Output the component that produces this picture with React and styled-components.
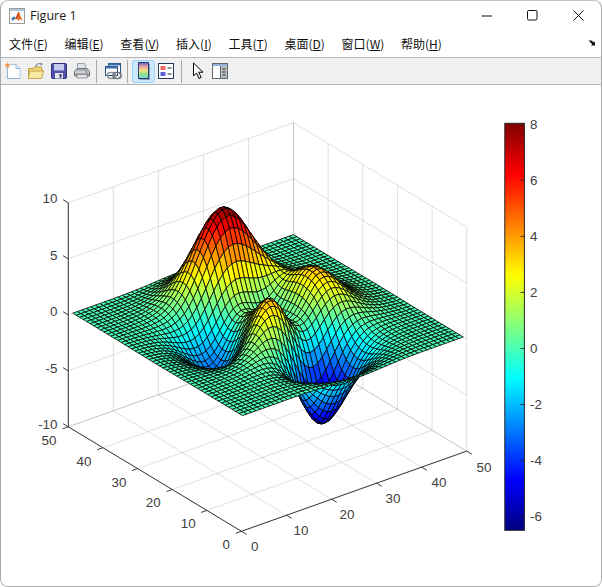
import React from "react";
import styled, { createGlobalStyle } from "styled-components";

const Global = createGlobalStyle`
  html, body { margin: 0; padding: 0; background: #fff; }
  #root { width: 602px; height: 587px; overflow: hidden; }
`;

const Win = styled.div`
  box-sizing: border-box;
  width: 602px;
  height: 587px;
  display: flex;
  flex-direction: column;
  background: #fff;
  border: 1px solid #a9a9a9;
  border-top-color: #c4c4c4;
  border-radius: 8px;
  overflow: hidden;
`;
const TitleBar = styled.div`
  height: 29px;
  display: flex;
  align-items: center;
  padding-left: 8px;
  flex: none;
`;
const TitleText = styled.span`
  margin-left: 5px;
  font: 12.5px "Open Sans", "Noto Sans", sans-serif;
  color: #1a1a1a;
  flex: 1;
`;
const WinBtn = styled.div`
  width: 46px;
  height: 29px;
  display: flex;
  align-items: center;
  justify-content: center;
`;
const MenuBar = styled.div`
  height: 27px;
  flex: none;
  display: flex;
  align-items: center;
  padding: 0 4px 0 8px;
  gap: 16.7px;
  font: 12px "Noto Sans CJK SC", "Noto Sans", sans-serif;
  color: #111;
`;
const MenuItem = styled.span`
  white-space: nowrap;
`;
const MenuEnd = styled.span`
  margin-left: auto;
  display: flex;
`;
const Toolbar = styled.div`
  box-sizing: border-box;
  height: 28px;
  flex: none;
  display: flex;
  align-items: center;
  padding-left: 0;
  background: #f0f0f0;
  border-top: 1px solid #b4b4b4;
  border-bottom: 1px solid #b4b4b4;
`;
const ToolBtn = styled.div`
  box-sizing: border-box;
  width: ${(p) => p.$w ?? 23}px;
  height: 23px;
  display: flex;
  align-items: center;
  justify-content: center;
  border-radius: 3px;
  border: 1px solid ${(p) => (p.$active ? "#99d1ff" : "transparent")};
  background: ${(p) => (p.$active ? "#cce8ff" : "transparent")};
`;
const Sep = styled.div`
  width: 1px;
  height: 23px;
  background: #a8a8a8;
  margin: 0 ${(p) => p.$r ?? 4}px 0 ${(p) => p.$l ?? 3}px;
`;
const Canvas = styled.div`
  flex: 1;
  min-height: 0;
  background: #fff;
`;
const Plot = styled.svg`
  display: block;
  width: 600px;
  height: 501px;
`;
const Tick = styled.text`
  font: 13.4px "Liberation Sans", Arial, sans-serif;
  fill: #404040;
  text-anchor: ${(p) => p.$anchor || "middle"};
  dominant-baseline: central;
`;

/* ---------- surface data ---------- */
const N = 50;
const peaks = (x, y) =>
  3 * (1 - x) ** 2 * Math.exp(-(x ** 2) - (y + 1) ** 2) -
  10 * (x / 5 - x ** 3 - y ** 5) * Math.exp(-(x ** 2) - y ** 2) -
  (1 / 3) * Math.exp(-((x + 1) ** 2) - y ** 2);

const Z = [];
let zMin = Infinity;
let zMax = -Infinity;
for (let r = 0; r < N; r++) {
  const row = [];
  for (let c = 0; c < N; c++) {
    const v = peaks(-3 + (6 * c) / (N - 1), -3 + (6 * r) / (N - 1));
    row.push(v);
    zMin = Math.min(zMin, v);
    zMax = Math.max(zMax, v);
  }
  Z.push(row);
}

const O = [241.5, 531.3];
const XV = [225.2, -80.2];
const YV = [-173.2, -104.5];
const ZS = 11.2;
const proj = (x, y, z) => [
  O[0] + (x / 50) * XV[0] + (y / 50) * YV[0],
  O[1] + (x / 50) * XV[1] + (y / 50) * YV[1] - (z + 10) * ZS,
];
const pt = (p) => `${p[0].toFixed(2)},${p[1].toFixed(2)}`;
const clamp = (v) => Math.max(0, Math.min(1, v));
const jet = (t) => {
  const r = clamp(Math.min(4 * t - 1.5, -4 * t + 4.5));
  const g = clamp(Math.min(4 * t - 0.5, -4 * t + 3.5));
  const b = clamp(Math.min(4 * t + 0.5, -4 * t + 2.5));
  return `rgb(${Math.round(r * 255)},${Math.round(g * 255)},${Math.round(b * 255)})`;
};

const faces = [];
for (let r = N - 2; r >= 0; r--) {
  for (let c = N - 2; c >= 0; c--) {
    const P = [
      proj(c + 1, r + 1, Z[r][c]),
      proj(c + 2, r + 1, Z[r][c + 1]),
      proj(c + 2, r + 2, Z[r + 1][c + 1]),
      proj(c + 1, r + 2, Z[r + 1][c]),
    ];
    faces.push({
      key: `${r}-${c}`,
      points: P.map(pt).join(" "),
      fill: jet((Z[r][c] - zMin) / (zMax - zMin)),
    });
  }
}

const ticks = [0, 10, 20, 30, 40, 50];
const zticks = [-10, -5, 0, 5, 10];
const gridLines = [];
ticks.forEach((t) => {
  gridLines.push([proj(t, 0, -10), proj(t, 50, -10)]);
  gridLines.push([proj(0, t, -10), proj(50, t, -10)]);
  gridLines.push([proj(t, 50, -10), proj(t, 50, 10)]);
  gridLines.push([proj(50, t, -10), proj(50, t, 10)]);
});
zticks.forEach((z) => {
  gridLines.push([proj(0, 50, z), proj(50, 50, z)]);
  gridLines.push([proj(50, 50, z), proj(50, 0, z)]);
});

const zLabels = [[10, 198], [5, 255], [0, 311], [-5, 368], [-10, 424]];
const yLabels = [[50, 49, 440.7], [40, 84, 461.7], [30, 119, 482.5], [20, 153.3, 502.7], [10, 188.3, 523.3], [0, 226.3, 544.3]];
const xLabels = [[0, 254.7, 546.7], [10, 301, 530.5], [20, 347, 514], [30, 393, 498], [40, 439, 482.3], [50, 484, 467.3]];
const cbTicks = [8, 6, 4, 2, 0, -2, -4, -6];
const cbY = (v) => 348.5 - v * 28.03;
const jetStops = [
  [0, "#800000"],
  [0.125, "#ff0000"],
  [0.375, "#ffff00"],
  [0.625, "#00ffff"],
  [0.875, "#0000ff"],
  [1, "#000080"],
];

const line = (a, b, i, props) => (
  <line key={i} x1={a[0]} y1={a[1]} x2={b[0]} y2={b[1]} {...props} />
);

const Chart = () => {
  const axis = { stroke: "#262626", strokeWidth: 0.9 };
  return (
    <Plot viewBox="1 85 600 501">
      <defs>
        <linearGradient id="jetbar" x1="0" y1="0" x2="0" y2="1">
          {jetStops.map(([o, c]) => (
            <stop key={o} offset={o} stopColor={c} />
          ))}
        </linearGradient>
      </defs>
      {gridLines.map(([a, b], i) => line(a, b, i, { stroke: "#262626", strokeOpacity: 0.16, strokeWidth: 0.9 }))}
      {line(proj(0, 0, -10), proj(50, 0, -10), "xa", axis)}
      {line(proj(0, 0, -10), proj(0, 50, -10), "ya", axis)}
      {line(proj(0, 50, -10), proj(0, 50, 10), "za", axis)}
      {ticks.map((t) => {
        const a = proj(t, 0, -10);
        const b = proj(0, t, -10);
        return (
          <g key={t}>
            {line(a, [a[0] + 5.2, a[1] + 3.1], "x", axis)}
            {line(b, [b[0] - 5.7, b[1] + 2], "y", axis)}
          </g>
        );
      })}
      {zticks.map((z) => {
        const a = proj(0, 50, z);
        return <g key={z}>{line(a, [a[0] - 5.2, a[1] - 3.1], "z", axis)}</g>;
      })}
      <g stroke="#000" strokeWidth="0.8" strokeLinejoin="round">
        {faces.map((f) => (
          <polygon key={f.key} points={f.points} fill={f.fill} />
        ))}
      </g>
      {zLabels.map(([v, y]) => (
        <Tick key={v} $anchor="end" x={57.5} y={y}>{v}</Tick>
      ))}
      {yLabels.map(([v, x, y]) => (
        <Tick key={v} x={x} y={y}>{v}</Tick>
      ))}
      {xLabels.map(([v, x, y]) => (
        <Tick key={v} x={x} y={y}>{v}</Tick>
      ))}
      <rect x="504.8" y="123.3" width="19.6" height="407" fill="url(#jetbar)" stroke="#262626" strokeWidth="1" />
      {cbTicks.map((v) => (
        <g key={v}>
          {line([520.5, cbY(v)], [524.4, cbY(v)], "t", axis)}
          <Tick $anchor="start" x={530} y={cbY(v)}>{v}</Tick>
        </g>
      ))}
    </Plot>
  );
};

/* ---------- icons ---------- */
const Logo = () => (
  <svg width="16" height="16" viewBox="0 0 16 16">
    <rect x="0.5" y="0.5" width="15" height="15" fill="#fbfbfb" stroke="#9a9a9a" />
    <rect x="1" y="1" width="14" height="2" fill="#a9c6e4" />
    <polygon points="2,10.5 5,8.5 7,9.5 5,11.5 4,13" fill="#3d7fc0" />
    <polygon points="5,11.5 7,9.5 8.8,5 10,3.8 11.5,8 13.8,13 11,11 9.5,13 8,11" fill="#e0682a" />
    <polygon points="7,9.5 8.8,5 10,3.8 9,8 8,11" fill="#c9402a" />
  </svg>
);
const NewIcon = () => (
  <svg width="18" height="18" viewBox="0 0 18 18">
    <path d="M3.5 2.5h8.5l4 4v10h-12.500z" fill="#fff" stroke="#a9c8e8" />
    <path d="M12 2.500v4h4" fill="#e4effa" stroke="#88aed6" />
    <path d="M3.500 2.500v14h12.500" fill="none" stroke="#8fb4dc" />
    <path d="M3.500 0.500l0.800 1.800 1.900 0.300-1.400 1.300 0.400 1.900-1.700-1-1.700 1 0.400-1.900-1.400-1.300 1.900-0.300z" fill="#f09048" stroke="#e8b070" strokeWidth="0.5" />
  </svg>
);
const OpenIcon = () => (
  <svg width="18" height="18" viewBox="0 0 18 18">
    <path d="M1.500 6.500h5l1-1.500h7v3h1.500l-2 8.500h-12.500z" fill="#f5d777" stroke="#bd9a3c" />
    <path d="M1.500 16.500l1-7.500h14l-2 7.500z" fill="#fbe9a4" stroke="#c8a44a" />
    <path d="M8.500 4.500c1-2.500 3.500-3.500 6-2.500" fill="none" stroke="#7f8b96" strokeWidth="1.200" />
    <path d="M14 0.500l2 2-2.700 0.800z" fill="#7f8b96" />
  </svg>
);
const SaveIcon = () => (
  <svg width="16" height="16" viewBox="0 0 16 16">
    <rect x="0.500" y="0.500" width="15" height="15" rx="1" fill="#4f52ac" stroke="#30307c" />
    <rect x="3" y="1" width="10" height="6.500" fill="#c4c8ea" />
    <rect x="4" y="10" width="8" height="5.500" fill="#e6e6ee" />
    <rect x="8.500" y="11" width="2" height="3.500" fill="#33336a" />
  </svg>
);
const PrintIcon = () => (
  <svg width="18" height="18" viewBox="0 0 18 18">
    <path d="M4.500 1.500h7l2 6h-9z" fill="#dfe6ec" stroke="#9aa3ab" />
    <path d="M1.500 9.500l2.500-3h10l2.500 3v4.500h-15z" fill="#a8adb2" stroke="#6d7276" />
    <rect x="2" y="9" width="14" height="2" fill="#cfd2d5" />
    <rect x="4" y="12.500" width="10" height="3.500" fill="#e6e6e6" stroke="#74787c" strokeWidth="0.700" />
    <circle cx="13.500" cy="10" r="0.800" fill="#555" />
  </svg>
);
const LinkIcon = () => (
  <svg width="18" height="18" viewBox="0 0 18 18">
    <rect x="4.500" y="1.500" width="12" height="9" fill="#fff" stroke="#24507c" />
    <rect x="4.500" y="1.500" width="12" height="2" fill="#3b6ea8" />
    <rect x="1.500" y="4.500" width="12" height="9" fill="#fff" stroke="#24507c" />
    <rect x="1.500" y="4.500" width="12" height="2" fill="#3b6ea8" />
    <rect x="3.500" y="10.500" width="8" height="6" rx="3" fill="none" stroke="#8f98a0" strokeWidth="1.700" />
    <rect x="9" y="10.500" width="8" height="6" rx="3" fill="none" stroke="#6f7880" strokeWidth="1.700" />
  </svg>
);
const BarIcon = () => (
  <svg width="12" height="18" viewBox="0 0 12 18">
    <defs>
      <linearGradient id="barIcon" x1="0" y1="0" x2="0" y2="1">
        <stop offset="0" stopColor="#5560c8" />
        <stop offset="0.25" stopColor="#e8a0a8" />
        <stop offset="0.5" stopColor="#f0e080" />
        <stop offset="0.75" stopColor="#90e090" />
        <stop offset="1" stopColor="#70d8e8" />
      </linearGradient>
    </defs>
    <rect x="0.500" y="0.500" width="10" height="16" fill="url(#barIcon)" stroke="#2c3e70" />
    <rect x="11" y="2" width="1" height="15.500" fill="#8aa0b8" />
    <rect x="1.500" y="17" width="10.500" height="1" fill="#8aa0b8" />
  </svg>
);
const LegendIcon = () => (
  <svg width="16" height="16" viewBox="0 0 16 16">
    <rect x="0.500" y="0.500" width="15" height="15" fill="#fff" stroke="#24385c" />
    <rect x="2.500" y="3" width="5" height="4" fill="#f06868" />
    <rect x="2.500" y="9" width="5" height="4" fill="#5a60d0" />
    <path d="M9.500 5h4M9.500 11h4" stroke="#222" strokeWidth="1.200" />
  </svg>
);
const ArrowIcon = () => (
  <svg width="14" height="18" viewBox="0 0 14 18">
    <path d="M1.500 1v13l3-3 2.500 5.500 2.200-1-2.500-5.300h4.300z" fill="#fff" stroke="#000" strokeWidth="1" strokeLinejoin="miter" />
  </svg>
);
const InspectorIcon = () => (
  <svg width="16" height="16" viewBox="0 0 16 16">
    <rect x="0.500" y="0.500" width="15" height="15" fill="#fff" stroke="#5d6870" />
    <rect x="1" y="1" width="14" height="2" fill="#8fb4d8" />
    <rect x="9" y="3" width="6" height="12" fill="#b8bcbf" />
    <path d="M8.500 3v12" stroke="#5d6870" />
    <path d="M10.500 6h3M10.500 9h3M10.500 12h3" stroke="#333" />
  </svg>
);
const MinIcon = () => (
  <svg width="11" height="11" viewBox="0 0 11 11"><path d="M0.500 6h10.500" stroke="#111" fill="none" /></svg>
);
const MaxIcon = () => (
  <svg width="11" height="11" viewBox="0 0 11 11"><rect x="0.500" y="0.500" width="9.500" height="9.500" rx="1.200" fill="none" stroke="#111" /></svg>
);
const CloseIcon = () => (
  <svg width="11" height="11" viewBox="0 0 11 11"><path d="M0.500 0.500l10 10M10.500 0.500l-10 10" stroke="#111" fill="none" /></svg>
);
const DockIcon = () => (
  <svg width="9" height="7" viewBox="0 0 9 7">
    <path d="M0.500 0.500h3l2.500 2 1-1v4h-4l1.200-1.200z" fill="#111" />
  </svg>
);

const menus = [
  ["文件", "F"], ["编辑", "E"], ["查看", "V"], ["插入", "I"],
  ["工具", "T"], ["桌面", "D"], ["窗口", "W"], ["帮助", "H"],
];

export default function App() {
  return (
    <>
      <Global />
      <Win>
        <TitleBar>
          <Logo />
          <TitleText>Figure 1</TitleText>
          <WinBtn><MinIcon /></WinBtn>
          <WinBtn><MaxIcon /></WinBtn>
          <WinBtn><CloseIcon /></WinBtn>
        </TitleBar>
        <MenuBar>
          {menus.map(([t, k]) => (
            <MenuItem key={k}>{t}(<u>{k}</u>)</MenuItem>
          ))}
          <MenuEnd><DockIcon /></MenuEnd>
        </MenuBar>
        <Toolbar>
          <ToolBtn><NewIcon /></ToolBtn>
          <ToolBtn><OpenIcon /></ToolBtn>
          <ToolBtn><SaveIcon /></ToolBtn>
          <ToolBtn><PrintIcon /></ToolBtn>
          <Sep />
          <ToolBtn><LinkIcon /></ToolBtn>
          <Sep />
          <ToolBtn $active><BarIcon /></ToolBtn>
          <ToolBtn $w={21}><LegendIcon /></ToolBtn>
          <Sep $l={5} $r={7} />
          <ToolBtn $w={19}><ArrowIcon /></ToolBtn>
          <ToolBtn><InspectorIcon /></ToolBtn>
        </Toolbar>
        <Canvas><Chart /></Canvas>
      </Win>
    </>
  );
}
